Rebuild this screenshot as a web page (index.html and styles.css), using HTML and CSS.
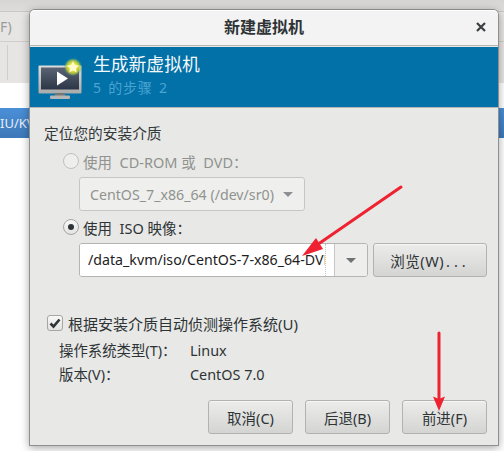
FILE: index.html
```html
<!DOCTYPE html>
<html lang="zh-CN">
<head>
<meta charset="utf-8">
<title>新建虚拟机</title>
<link rel="stylesheet" href="styles.css">
</head>
<body>
<div class="desktop">
  <div class="app-top"></div>
  <div class="app-menu"><span class="menu-frag">F)</span></div>
  <div class="app-toolbar"><span class="tool-sep"></span></div>
  <div class="app-list"><div class="app-row"><span class="row-text">IU/KV</span></div></div>

  <section class="dialog">
    <header class="titlebar">
      <span class="title">新建虚拟机</span>
      <svg class="close" viewBox="0 0 10 10" width="10" height="10"><path d="M1 1L9 9M9 1L1 9" stroke="#3a3e40" stroke-width="2.2" fill="none"/></svg>
    </header>
    <div class="banner">
      <svg class="vm-icon" viewBox="0 0 46 42" width="46" height="42">
        <defs>
          <radialGradient id="glow"><stop offset="0.35" stop-color="#f6f23a"/><stop offset="0.7" stop-color="#c9d437" stop-opacity="0.75"/><stop offset="1" stop-color="#2f8a8a" stop-opacity="0"/></radialGradient>
          <linearGradient id="screen" x1="0" y1="0" x2="0" y2="1"><stop offset="0" stop-color="#5a6474"/><stop offset="1" stop-color="#2c3646"/></linearGradient>
          <linearGradient id="bezel" x1="0" y1="0" x2="0" y2="1"><stop offset="0" stop-color="#dcdedc"/><stop offset="1" stop-color="#a9abaa"/></linearGradient>
        </defs>
        <rect x="0.5" y="8.5" width="43" height="28" rx="1" fill="url(#bezel)"/>
        <rect x="3" y="10.5" width="38" height="22" fill="url(#screen)"/>
        <path d="M19 14.500L30 21.500L19 28.500Z" fill="#fff"/>
        <rect x="17" y="36" width="10" height="3" fill="#777"/>
        <rect x="12" y="38.500" width="20" height="3.500" rx="1" fill="#b5b7b6"/>
        <circle cx="35" cy="10" r="9.500" fill="url(#glow)"/>
        <path d="M35 4L36.800 8.100L41 8.500L37.800 11.300L38.800 15.500L35 13.200L31.200 15.500L32.200 11.300L29 8.500L33.200 8.100Z" fill="#fffbd0"/>
      </svg>
      <div class="banner-text">
        <div class="banner-title">生成新虚拟机</div>
        <div class="banner-step">5 的步骤 2</div>
      </div>
    </div>
    <div class="content">
      <div class="locate">定位您的安装介质</div>
      <div class="media-group">
        <div class="radio-row disabled"><span class="radio"></span><span>使用&nbsp; CD-ROM 或&nbsp; DVD：</span></div>
        <div class="combo">
          <span class="combo-text">CentOS_7_x86_64 (/dev/sr0)</span><span class="caret caret-dim"></span>
        </div>
        <div class="radio-row"><span class="radio checked"></span><span>使用&nbsp; ISO 映像：</span></div>
        <div class="iso-row">
          <div class="entry">
            <div class="entry-field"><span class="entry-text">/data_kvm/iso/CentOS-7-x86_64-DVD-1810.iso</span></div>
            <div class="entry-drop"><span class="caret"></span></div>
          </div>
          <button class="btn browse">浏览(W)<span class="dots">...</span></button>
        </div>
      </div>
      <div class="detect">
        <span class="check"><svg viewBox="0 0 14 14" width="14" height="14"><path d="M2.500 7.500L5.500 10.500L11.500 3.500" stroke="#2e3436" stroke-width="2.600" fill="none"/></svg></span>
        <span>根据安装介质自动侦测操作系统(U)</span>
      </div>
      <dl class="os-info">
        <dt>操作系统类型(T)：</dt><dd>Linux</dd>
        <dt>版本(V)：</dt><dd>CentOS 7.0</dd>
      </dl>
      <div class="actions">
        <button class="btn action">取消(C)</button>
        <button class="btn action">后退(B)</button>
        <button class="btn action">前进(F)</button>
      </div>
    </div>
  </section>

  <svg class="arrows" viewBox="0 0 504 451" width="504" height="451">
    <path d="M401 187L314 247" stroke="#ee2230" stroke-width="3" stroke-linecap="round" fill="none"/>
    <path d="M302 256L316 238L323 249Z" fill="#ee2230"/>
    <path d="M439 333V402" stroke="#ee2230" stroke-width="3" stroke-linecap="round" fill="none"/>
    <path d="M439 411L433 396.500L439 399L445 396.500Z" fill="#ee2230"/>
  </svg>
</div>
</body>
</html>
```

FILE: styles.css
```css
* { box-sizing: border-box; }
html, body { margin: 0; padding: 0; }
body { font-family: "Noto Sans", "Noto Sans CJK SC", sans-serif; }

.desktop {
  position: relative;
  width: 504px;
  height: 451px;
  overflow: hidden;
  background: #e8e7e5;
}

.app-top {
  height: 12px;
  background: linear-gradient(#d6d5d3, #dedddb);
  border-bottom: 1px solid #c9c8c6;
}
.app-menu {
  height: 30px;
  padding-top: 5px;
  background: #e6e5e3;
  border-bottom: 1px solid #cfcecc;
  color: #9b9b9b;
  font-size: 14px;
  line-height: 20px;
}
.app-toolbar { height: 41px; background: #e6e5e3; padding: 3px 0 0 7px; }
.tool-sep { display: block; width: 1px; height: 35px; background: #cfcecc; }
.app-list { height: 368px; padding-top: 25px; background: #fff; }
.app-row {
  height: 30px;
  background: linear-gradient(#4a90d9, #3d78b8);
  color: #e8eef6;
  font-size: 13px;
  line-height: 30px;
  overflow: hidden;
}

.dialog {
  position: absolute;
  left: 29px;
  top: 9px;
  width: 470px;
  height: 437px;
  display: flex;
  flex-direction: column;
  background: #e8e8e6;
  border: 1px solid #8f8f8d;
  border-top-color: #8a8a88;
  border-radius: 6px 6px 0 0;
  box-shadow: 0 2px 9px rgba(0, 0, 0, 0.35);
  color: #2e3436;
  font-size: 14px;
}

.titlebar {
  position: relative;
  flex: none;
  height: 36px;
  display: flex;
  align-items: center;
  justify-content: center;
  padding-bottom: 3px;
  background: #f3f3f3;
  border-bottom: 1px solid #b6b6b4;
  border-radius: 5px 5px 0 0;
  box-shadow: inset 0 1px 0 #fff;
}
.title { font-size: 16px; font-weight: 700; color: #2e3436; }
.close { position: absolute; right: 12px; top: 12px; }

.banner {
  flex: none;
  height: 61px;
  margin-top: 1px;
  display: flex;
  background: #0171a8;
  border-bottom: 1px solid #b4b6b6;
  padding: 6px 0 0 8px;
}
.vm-icon { flex: none; margin-top: 4px; }
.banner-text { margin-left: 9px; }
.banner-title { color: #f4f8fa; font-size: 17.800px; line-height: 22px; }
.banner-step { color: #4ba3d3; font-size: 14px; line-height: 20px; margin-top: 3px; word-spacing: 2px; letter-spacing: 0.800px; }

.content { flex: 1; display: flex; flex-direction: column; padding: 0 11px 0 14px; }
.locate { margin-top: 15px; font-size: 14.700px; line-height: 20px; color: #33393b; }

.media-group { margin: 8px 0 0 19px; display: flex; flex-direction: column; }
.radio-row { display: flex; align-items: center; gap: 4px; height: 20px; font-size: 14.500px; }
.radio-row.disabled { color: #90938f; }
.radio {
  flex: none;
  width: 16px;
  height: 16px;
  border-radius: 50%;
  border: 1px solid #a6a6a4;
  background: linear-gradient(#f8f8f8, #e2e2e0);
  display: flex;
  align-items: center;
  justify-content: center;
}
.disabled .radio { background: #eeeeec; border-color: #c0c0be; }
.radio.checked::after { content: ""; width: 6px; height: 6px; border-radius: 50%; background: #2e3436; }

.combo {
  margin: 6px 0 6px 16px;
  width: 226px;
  height: 34px;
  display: flex;
  align-items: center;
  justify-content: space-between;
  padding: 0 11px 0 10px;
  background: #efefed;
  border: 1px solid #c6c6c4;
  border-radius: 3px;
  color: #90938f;
  font-size: 14.200px;
  white-space: nowrap;
}
.caret { display: block; width: 0; height: 0; border: 5px solid transparent; border-top: 5px solid #6e7274; border-bottom: 0; }
.caret-dim { border-top-color: #8d9092; }

.iso-row { margin: 6px 0 0 16px; display: flex; gap: 5px; }
.entry { display: flex; width: 289px; height: 34px; border: 1px solid #b4b4b2; border-radius: 3px; overflow: hidden; background: #fff; }
.entry-field { flex: none; width: 246px; overflow: hidden; background: #fff; padding-left: 8px; line-height: 32px; font-size: 14.200px; color: #1d2122; white-space: nowrap; }
.entry-text { display: block; width: 238px; overflow: hidden; border-right: 1px dotted #c4c4c4; }
.entry-drop { flex: 1; margin-left: 8px; display: flex; align-items: center; justify-content: center; background: #eeeeec; border-left: 1px solid #c6c6c4; }

.btn {
  display: block;
  margin: 0;
  padding: 0;
  border: 1px solid #b2b2b0;
  border-radius: 3px;
  background: linear-gradient(#ececea, #d4d4d2);
  box-shadow: inset 0 1px 0 #f6f6f4;
  color: #2e3436;
  font-family: inherit;
  font-size: 14.500px;
}
.browse { width: 114px; height: 34px; letter-spacing: 0.500px; }
.dots { letter-spacing: 4px; margin-left: 2px; }

.detect { margin: 36px 0 0 3px; display: flex; align-items: center; gap: 5px; height: 20px; font-size: 15px; }
.check {
  flex: none;
  width: 16px;
  height: 16px;
  display: flex;
  align-items: center;
  justify-content: center;
  border: 1px solid #a6a6a4;
  border-radius: 3px;
  background: linear-gradient(#f8f8f8, #e2e2e0);
}

.os-info {
  margin: 8px 0 0 15px;
  display: grid;
  grid-template-columns: 131px 1fr;
  row-gap: 4px;
  font-size: 14.400px;
  line-height: 20px;
}
.os-info dt, .os-info dd { margin: 0; }

.actions { margin: 15px 0 0; display: flex; justify-content: flex-end; gap: 12px; }
.action { width: 85px; height: 34px; }

.arrows { position: absolute; left: 0; top: 0; pointer-events: none; }
```
